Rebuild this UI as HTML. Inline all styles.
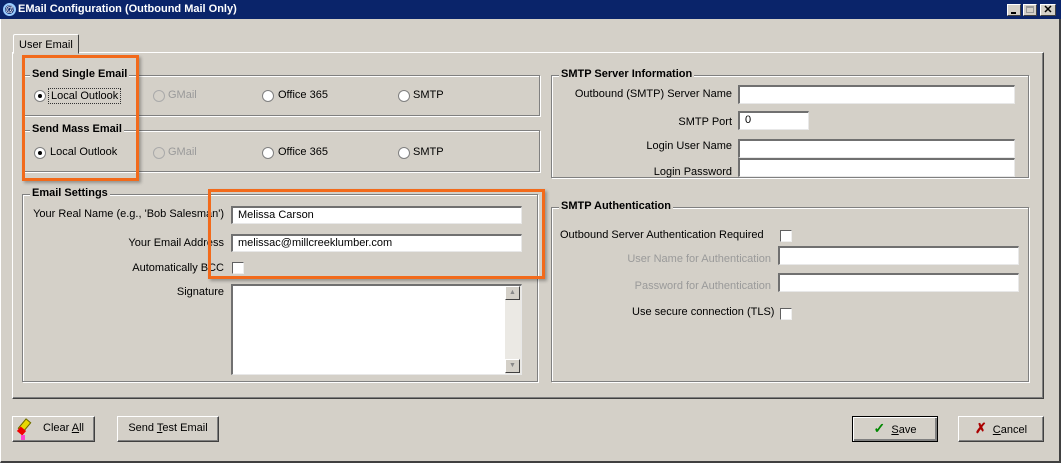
<!DOCTYPE html>
<html><head><style>
*{box-sizing:border-box;margin:0;padding:0}
body{width:1061px;height:463px;background:#d4d0c8;font-family:"Liberation Sans",Tahoma,sans-serif;font-size:11px;color:#000;position:relative;overflow:hidden}
.a{position:absolute;white-space:nowrap}
.title{left:0;top:0;width:1061px;height:19px;background:#0a246a;color:#fff;font-weight:bold;font-size:11px;line-height:19px;padding-left:18px}
.grp{position:absolute;border:1px solid #808080;box-shadow:1px 1px 0 #fff inset,1px 1px 0 #fff}
.lg{position:absolute;top:-8px;left:7px;background:#d4d0c8;font-weight:bold;padding:0 2px;font-size:11px}
.inp{position:absolute;background:#fff;border-top:2px solid #707070;border-left:2px solid #707070;border-right:1px solid #e8e8e8;border-bottom:1px solid #e8e8e8;padding-left:5px;line-height:14px}
.cb{position:absolute;width:12px;height:12px;background:#fff;border-top:1px solid #606060;border-left:1px solid #606060;border-right:1px solid #eee;border-bottom:1px solid #eee}
.rd{position:absolute;width:12px;height:12px;border-radius:50%;background:#fff;border:1px solid #808080}
.rd.on::after{content:"";position:absolute;left:3px;top:3px;width:4px;height:4px;border-radius:50%;background:#000}
.rd.dis{background:#d4d0c8;border-color:#aaa}
.btn{position:absolute;border:1px solid;border-color:#fff #404040 #404040 #fff;box-shadow:inset -1px -1px 0 #808080;text-align:center;line-height:23px;height:26px}
.gray{color:#9a9a9a}
.or{position:absolute;border:3px solid #f26a1b;box-shadow:2px 2px 3px rgba(0,0,0,.3)}
.r{text-align:right}
</style></head><body>
<div class="a title">EMail Configuration (Outbound Mail Only)</div>
<div class="a" style="left:3px;top:3px;width:13px;height:13px;border-radius:50%;border:2px solid #9cf;color:#fff;font-size:9px;line-height:9px;text-align:center">@</div>
<div class="a" style="left:1007px;top:4px;width:14px;height:12px;background:#d4d0c8;border:1px solid;border-color:#fff #404040 #404040 #fff"></div>
<div class="a" style="left:1011px;top:12px;width:5px;height:2px;background:#000"></div>
<div class="a" style="left:1023px;top:4px;width:14px;height:12px;background:#d4d0c8;border:1px solid;border-color:#fff #404040 #404040 #fff"></div>
<div class="a" style="left:1026px;top:6px;width:8px;height:7px;border:1px solid #999;border-top-width:2px"></div>
<div class="a" style="left:1040px;top:4px;width:16px;height:12px;background:#d4d0c8;border:1px solid;border-color:#fff #404040 #404040 #fff;font-weight:bold;font-size:11px;line-height:10px;text-align:center">✕</div>
<div class="a" style="left:0;top:19px;width:1061px;height:444px;border-left:1px solid #fff;border-right:2px solid #404040;border-bottom:2px solid #404040"></div>

<div class="a" style="left:12px;top:52px;width:1032px;height:347px;border:1px solid;border-color:#fff #404040 #404040 #fff;box-shadow:inset -1px -1px 0 #808080"></div>
<div class="a" style="left:13px;top:34px;width:66px;height:20px;background:#d4d0c8;border:1px solid;border-color:#fff #404040 transparent #fff;border-radius:2px 2px 0 0;padding:4px 0 0 5px">User Email</div>

<div class="grp" style="left:22px;top:75px;width:518px;height:41px"><span class="lg">Send Single Email</span></div>
<div class="rd on" style="left:34px;top:90px"></div><div class="a" style="left:48px;top:88px;border:1px dotted #333;padding:0 2px;line-height:14px">Local Outlook</div>
<div class="rd dis" style="left:153px;top:90px"></div><div class="a gray" style="left:168px;top:89px">GMail</div>
<div class="rd" style="left:262px;top:90px"></div><div class="a" style="left:278px;top:89px">Office 365</div>
<div class="rd" style="left:398px;top:90px"></div><div class="a" style="left:413px;top:89px">SMTP</div>

<div class="grp" style="left:22px;top:130px;width:518px;height:42px"><span class="lg">Send Mass Email</span></div>
<div class="rd on" style="left:34px;top:147px"></div><div class="a" style="left:50px;top:146px">Local Outlook</div>
<div class="rd dis" style="left:153px;top:147px"></div><div class="a gray" style="left:168px;top:146px">GMail</div>
<div class="rd" style="left:262px;top:147px"></div><div class="a" style="left:278px;top:146px">Office 365</div>
<div class="rd" style="left:398px;top:147px"></div><div class="a" style="left:413px;top:146px">SMTP</div>

<div class="grp" style="left:22px;top:194px;width:516px;height:188px"><span class="lg">Email Settings</span></div>
<div class="a r" style="left:30px;top:208px;width:194px">Your Real Name (e.g., 'Bob Salesman')</div>
<div class="inp" style="left:231px;top:206px;width:291px;height:18px">Melissa Carson</div>
<div class="a r" style="left:30px;top:237px;width:194px">Your Email Address</div>
<div class="inp" style="left:231px;top:234px;width:291px;height:18px">melissac@millcreeklumber.com</div>
<div class="a r" style="left:30px;top:262px;width:194px">Automatically BCC</div>
<div class="cb" style="left:232px;top:262px"></div>
<div class="a r" style="left:30px;top:286px;width:194px">Signature</div>
<div class="inp" style="left:231px;top:284px;width:291px;height:91px;padding:0"></div>
<div class="a" style="left:505px;top:286px;width:16px;height:88px;background:#ebe9e4"></div>
<div class="a" style="left:505px;top:286px;width:15px;height:14px;background:#d4d0c8;border:1px solid;border-color:#fff #404040 #404040 #fff;font-size:7px;line-height:12px;text-align:center;color:#888">▲</div>
<div class="a" style="left:505px;top:359px;width:15px;height:14px;background:#d4d0c8;border:1px solid;border-color:#fff #404040 #404040 #fff;font-size:7px;line-height:12px;text-align:center;color:#888">▼</div>

<div class="grp" style="left:551px;top:75px;width:478px;height:103px"><span class="lg">SMTP Server Information</span></div>
<div class="a r" style="left:560px;top:88px;width:172px">Outbound (SMTP) Server Name</div>
<div class="inp" style="left:738px;top:85px;width:277px;height:19px"></div>
<div class="a r" style="left:560px;top:116px;width:172px">SMTP Port</div>
<div class="inp" style="left:738px;top:111px;width:71px;height:19px">0</div>
<div class="a r" style="left:560px;top:140px;width:172px">Login User Name</div>
<div class="inp" style="left:738px;top:139px;width:277px;height:19px"></div>
<div class="a r" style="left:560px;top:166px;width:172px">Login Password</div>
<div class="inp" style="left:738px;top:158px;width:277px;height:19px"></div>

<div class="grp" style="left:551px;top:207px;width:478px;height:175px"><span class="lg">SMTP Authentication</span></div>
<div class="a" style="left:560px;top:229px">Outbound Server Authentication Required</div>
<div class="cb" style="left:780px;top:230px"></div>
<div class="a r gray" style="left:560px;top:253px;width:211px">User Name for Authentication</div>
<div class="inp" style="left:778px;top:246px;width:241px;height:19px"></div>
<div class="a r gray" style="left:560px;top:280px;width:211px">Password for Authentication</div>
<div class="inp" style="left:778px;top:273px;width:241px;height:19px"></div>
<div class="a" style="left:632px;top:306px">Use secure connection (TLS)</div>
<div class="cb" style="left:780px;top:308px"></div>

<div class="btn" style="left:12px;top:416px;width:83px"><span style="padding-left:20px">Clear <u>A</u>ll</span></div>
<div class="a" style="left:21px;top:419px;width:7px;height:13px;background:#e8d800;transform:rotate(40deg);border:1px solid #660"></div>
<div class="a" style="left:18px;top:428px;width:7px;height:6px;background:#e00;transform:rotate(40deg)"></div>
<div class="a" style="left:21px;top:435px;width:4px;height:5px;background:#f4c"></div>
<div class="btn" style="left:117px;top:416px;width:102px">Send <u>T</u>est Email</div>
<div class="btn" style="left:852px;top:416px;width:86px;border:1px solid #000;box-shadow:inset 1px 1px 0 #fff,inset -2px -2px 0 #808080"><span style="color:#080;font-weight:bold;font-size:14px">✓</span> &nbsp;<u>S</u>ave</div>
<div class="btn" style="left:958px;top:416px;width:86px"><span style="color:#a00;font-weight:bold;font-size:14px">✗</span> &nbsp;<u>C</u>ancel</div>

<div class="or" style="left:22px;top:55px;width:117px;height:126px"></div>
<div class="or" style="left:208px;top:189px;width:337px;height:90px"></div>
</body></html>
